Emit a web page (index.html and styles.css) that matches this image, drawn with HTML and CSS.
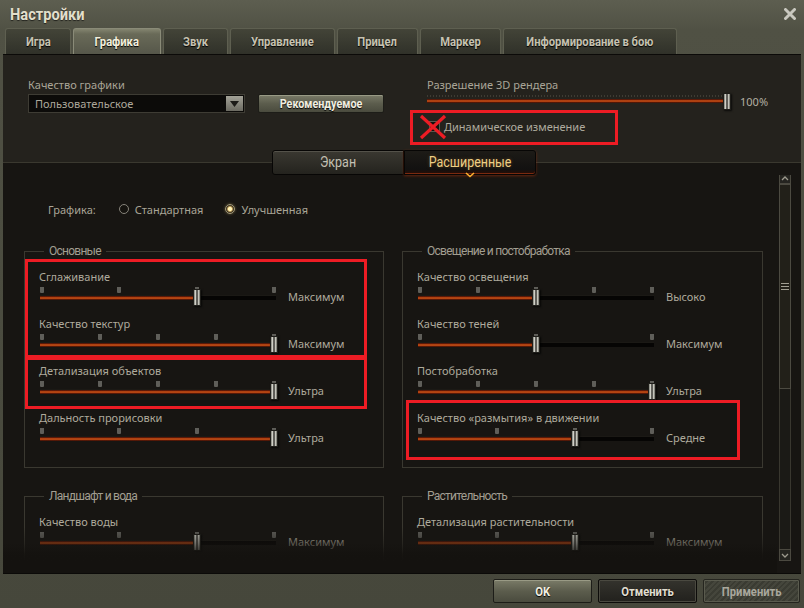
FILE: index.html
```html
<!DOCTYPE html>
<html lang="ru">
<head>
<meta charset="utf-8">
<title>Настройки</title>
<link rel="stylesheet" href="styles.css">
</head>
<body>
<div class="win">
  <header class="titlebar">
    <span class="title"><span class="nar">Настройки</span></span>
    <svg class="close" width="12" height="12" viewBox="0 0 12 12"><path d="M1.5 1.5 L10.5 10.5 M10.5 1.5 L1.5 10.5" stroke="#c9c8bf" stroke-width="3" stroke-linecap="round"/></svg>
  </header>
  <nav class="tabs">
    <div class="tab t1"><span class="nar">Игра</span></div>
    <div class="tab t2 active"><span class="nar">Графика</span></div>
    <div class="tab t3"><span class="nar">Звук</span></div>
    <div class="tab t4"><span class="nar">Управление</span></div>
    <div class="tab t5"><span class="nar">Прицел</span></div>
    <div class="tab t6"><span class="nar">Маркер</span></div>
    <div class="tab t7"><span class="nar">Информирование в бою</span></div>
  </nav>
  <main class="main">
    <section class="top">
      <div class="tcol-left">
        <div class="lbl">Качество графики</div>
        <div class="qrow">
          <div class="select"><span>Пользовательское</span><span class="sel-arrow"><svg width="9" height="6" viewBox="0 0 9 6"><path d="M0 0 H9 L4.5 6 Z" fill="#1c1b18"/></svg></span></div>
          <button class="btn btn-olive btn-rec"><span class="nar">Рекомендуемое</span></button>
        </div>
      </div>
      <div class="tcol-right">
        <div class="lbl">Разрешение 3D рендера</div>
        <div class="rrow">
          <div class="rslider">
            <div class="rdots"></div>
            <div class="rtrack"></div>
            <div class="thumb rthumb"></div>
          </div>
          <span class="rval">100%</span>
        </div>
        <div class="check"><span class="cbox"></span><span>Динамическое изменение</span></div>
      </div>
    </section>
    <div class="subtabs">
      <div class="stab"><span class="nar">Экран</span></div>
      <div class="stab active"><span class="nar">Расширенные</span>
        <svg class="chev" width="10" height="6" viewBox="0 0 10 6"><path d="M1 1 L5 4.5 L9 1" stroke="#ffb030" stroke-width="1.6" fill="none"/></svg>
      </div>
    </div>
    <section class="scrollarea">
      <div class="content">
        <div class="gfxrow">
          <span class="gfxlbl">Графика:</span>
          <span class="radio"></span><span class="rtxt">Стандартная</span>
          <span class="radio on"></span><span class="rtxt">Улучшенная</span>
        </div>
        <div class="groups">
          <fieldset class="grp">
            <legend>Основные</legend>
            <div class="srow">
              <div class="slbl">Сглаживание</div>
              <div class="sline">
                <div class="slider">
                  <div class="track"><div class="fill" style="width:calc(66.667% + 2px)"></div></div>
                  <div class="rail"><i style="left:0%"></i><i style="left:33.333%"></i><i style="left:66.667%"></i><i style="left:100%"></i><b class="thumb" style="left:66.667%"></b></div>
                </div>
                <span class="sval">Максимум</span>
              </div>
            </div>
            <div class="srow">
              <div class="slbl">Качество текстур</div>
              <div class="sline">
                <div class="slider">
                  <div class="track"><div class="fill" style="width:100%"></div></div>
                  <div class="rail"><i style="left:0%"></i><i style="left:25%"></i><i style="left:50%"></i><i style="left:75%"></i><i style="left:100%"></i><b class="thumb" style="left:100%"></b></div>
                </div>
                <span class="sval">Максимум</span>
              </div>
            </div>
            <div class="srow">
              <div class="slbl">Детализация объектов</div>
              <div class="sline">
                <div class="slider">
                  <div class="track"><div class="fill" style="width:100%"></div></div>
                  <div class="rail"><i style="left:0%"></i><i style="left:25%"></i><i style="left:50%"></i><i style="left:75%"></i><i style="left:100%"></i><b class="thumb" style="left:100%"></b></div>
                </div>
                <span class="sval">Ультра</span>
              </div>
            </div>
            <div class="srow">
              <div class="slbl">Дальность прорисовки</div>
              <div class="sline">
                <div class="slider">
                  <div class="track"><div class="fill" style="width:100%"></div></div>
                  <div class="rail"><i style="left:0%"></i><i style="left:33.333%"></i><i style="left:66.667%"></i><i style="left:100%"></i><b class="thumb" style="left:100%"></b></div>
                </div>
                <span class="sval">Ультра</span>
              </div>
            </div>
          </fieldset>
          <fieldset class="grp">
            <legend>Освещение и постобработка</legend>
            <div class="srow">
              <div class="slbl">Качество освещения</div>
              <div class="sline">
                <div class="slider">
                  <div class="track"><div class="fill" style="width:calc(50% + 2px)"></div></div>
                  <div class="rail"><i style="left:0%"></i><i style="left:25%"></i><i style="left:50%"></i><i style="left:75%"></i><i style="left:100%"></i><b class="thumb" style="left:50%"></b></div>
                </div>
                <span class="sval">Высоко</span>
              </div>
            </div>
            <div class="srow">
              <div class="slbl">Качество теней</div>
              <div class="sline">
                <div class="slider">
                  <div class="track"><div class="fill" style="width:calc(50% + 2px)"></div></div>
                  <div class="rail"><i style="left:0%"></i><i style="left:50%"></i><i style="left:100%"></i><b class="thumb" style="left:50%"></b></div>
                </div>
                <span class="sval">Максимум</span>
              </div>
            </div>
            <div class="srow">
              <div class="slbl">Постобработка</div>
              <div class="sline">
                <div class="slider">
                  <div class="track"><div class="fill" style="width:100%"></div></div>
                  <div class="rail"><i style="left:0%"></i><i style="left:25%"></i><i style="left:50%"></i><i style="left:75%"></i><i style="left:100%"></i><b class="thumb" style="left:100%"></b></div>
                </div>
                <span class="sval">Ультра</span>
              </div>
            </div>
            <div class="srow">
              <div class="slbl">Качество «размытия» в движении</div>
              <div class="sline">
                <div class="slider">
                  <div class="track"><div class="fill" style="width:calc(66.667% + 2px)"></div></div>
                  <div class="rail"><i style="left:0%"></i><i style="left:33.333%"></i><i style="left:66.667%"></i><i style="left:100%"></i><b class="thumb" style="left:66.667%"></b></div>
                </div>
                <span class="sval">Средне</span>
              </div>
            </div>
          </fieldset>
          <fieldset class="grp grp-low">
            <legend>Ландшафт и вода</legend>
            <div class="srow">
              <div class="slbl">Качество воды</div>
              <div class="sline">
                <div class="slider">
                  <div class="track"><div class="fill" style="width:calc(66.667% + 2px)"></div></div>
                  <div class="rail"><i style="left:0%"></i><i style="left:33.333%"></i><i style="left:66.667%"></i><i style="left:100%"></i><b class="thumb" style="left:66.667%"></b></div>
                </div>
                <span class="sval">Максимум</span>
              </div>
            </div>
          </fieldset>
          <fieldset class="grp grp-low">
            <legend>Растительность</legend>
            <div class="srow">
              <div class="slbl">Детализация растительности</div>
              <div class="sline">
                <div class="slider">
                  <div class="track"><div class="fill" style="width:calc(66.667% + 2px)"></div></div>
                  <div class="rail"><i style="left:0%"></i><i style="left:33.333%"></i><i style="left:66.667%"></i><i style="left:100%"></i><b class="thumb" style="left:66.667%"></b></div>
                </div>
                <span class="sval">Максимум</span>
              </div>
            </div>
          </fieldset>
        </div>
      </div>
      <div class="scrollbar">
        <div class="sb-btn"><svg width="8" height="5" viewBox="0 0 8 5"><path d="M1 4 L4 1 L7 4" stroke="#9d9a8e" stroke-width="1.3" fill="none"/></svg></div>
        <div class="sb-track">
          <div class="sb-thumb"><svg width="8" height="7" viewBox="0 0 8 7"><path d="M0 0.5 H8 M0 3.5 H8 M0 6.5 H8" stroke="#a19e92" stroke-width="1"/></svg></div>
        </div>
        <div class="sb-btn"><svg width="8" height="5" viewBox="0 0 8 5"><path d="M1 1 L4 4 L7 1" stroke="#9d9a8e" stroke-width="1.3" fill="none"/></svg></div>
      </div>
      <div class="fade"></div>
    </section>
  </main>
  <footer class="bottombar">
    <button class="btn btn-olive bb"><span class="nar">OK</span></button>
    <button class="btn btn-dark bb"><span class="nar">Отменить</span></button>
    <button class="btn btn-off bb"><span class="nar">Применить</span></button>
  </footer>

  <div class="mark m1"></div>
  <div class="mark m2"></div>
  <div class="mark m3"></div>
  <div class="mark m4"></div>
  <svg class="redx" width="30" height="28" viewBox="0 0 30 28"><path d="M3 3 L27 25 M27 3 L3 25" stroke="#ed1c24" stroke-width="3.2"/></svg>
</div>
</body>
</html>
```

FILE: styles.css
```css
* { box-sizing: border-box; margin: 0; padding: 0; }

body {
  width: 804px;
  height: 608px;
  overflow: hidden;
  background: #47483c;
  font-family: "Noto Sans", "DejaVu Sans", sans-serif;
  font-size: 11px;
  color: #aaa699;
}

.win {
  position: relative;
  width: 804px;
  height: 608px;
  display: flex;
  flex-direction: column;
  background: linear-gradient(180deg, #5d5e50 0px, #505144 30px, #46473b 100%);
}

/* condensed look for the game's narrow UI font */
.nar {
  display: inline-block;
  transform: scaleX(.86);
  white-space: nowrap;
}

.titlebar {
  height: 28px;
  display: flex;
  align-items: center;
  justify-content: space-between;
  padding: 0 8px 0 10px;
}

.title {
  font-family: Roboto, "DejaVu Sans", sans-serif;
  font-weight: bold;
  font-size: 17px;
  color: #e2dfcc;
  text-shadow: 0 1px 1px rgba(0,0,0,.6);
}
.title .nar { transform-origin: left center; }

.tabs {
  height: 26px;
  display: flex;
  gap: 2px;
  padding-left: 5px;
}

.tab {
  height: 26px;
  border: 1px solid #5e5f50;
  border-bottom: none;
  border-radius: 3px 3px 0 0;
  background: linear-gradient(180deg, #434438, #303129);
  display: flex;
  align-items: center;
  justify-content: center;
  font-family: Roboto, "DejaVu Sans", sans-serif;
  font-weight: bold;
  font-size: 13px;
  color: #c6c2b1;
  text-shadow: 0 1px 1px #000;
}
.tab.active {
  background: linear-gradient(180deg, #83846f, #696a58 20%, #56574a);
  border-color: #8a8b78;
  color: #f3efdc;
}
.t1 { width: 66px; }
.t2 { width: 88px; }
.t3 { width: 65px; }
.t4 { width: 105px; }
.t5 { width: 81px; }
.t6 { width: 81px; }
.t7 { width: 174px; }

.main {
  flex: 1;
  margin: 0 3px;
  display: flex;
  flex-direction: column;
  background: #171512;
  border-top: 1px solid #0b0a08;
  border-bottom: 1px solid #0b0a08;
  min-height: 0;
}

.top {
  height: 95px;
  background: #24221d;
  display: flex;
  padding: 22px 0 0 25px;
}

.lbl {
  height: 15px;
  line-height: 15px;
  color: #a9a597;
}

.tcol-left { width: 399px; }
.tcol-right { flex: 1; }

.qrow {
  display: flex;
  align-items: center;
  margin-top: 2px;
  gap: 13px;
}

.select {
  width: 217px;
  height: 19px;
  background: #0c0b09;
  border: 1px solid #3e3c34;
  display: flex;
  align-items: center;
  justify-content: space-between;
  padding: 0 1px 0 6px;
  color: #aca89b;
}
.sel-arrow {
  width: 17px;
  height: 15px;
  background: linear-gradient(180deg, #a3a297, #6c6b62);
  display: flex;
  align-items: center;
  justify-content: center;
}

.btn {
  font-family: Roboto, "DejaVu Sans", sans-serif;
  font-weight: bold;
  font-size: 13px;
  border-radius: 2px;
  display: flex;
  align-items: center;
  justify-content: center;
}
.btn-olive {
  background: linear-gradient(180deg, #7a7b68, #5c5d4d 50%, #4a4b3e);
  border: 1px solid #1d1d18;
  box-shadow: inset 0 1px 0 #999a85;
  color: #f1eee0;
  text-shadow: 0 1px 1px #000;
}
.btn-rec {
  width: 126px;
  height: 19px;
  font-size: 12.5px;
}
.btn-dark {
  background: linear-gradient(180deg, #34332d, #22211d);
  border: 1px solid #0d0c0a;
  box-shadow: inset 0 0 0 1px #4a4940;
  color: #e0ddd0;
  text-shadow: 0 1px 1px #000;
}
.btn-off {
  background: repeating-linear-gradient(135deg, #45463c 0 2px, #3a3b32 2px 4px);
  border: 1px solid #25251f;
  box-shadow: inset 0 0 0 1px #5a5b4e;
  color: #a9a89d;
}

.rrow {
  display: flex;
  align-items: center;
  height: 16px;
  margin-top: 1px;
}
.rslider {
  position: relative;
  width: 304px;
  height: 16px;
}
.rdots {
  position: absolute;
  left: 0; top: 2px;
  width: 297px;
  height: 2px;
  background: repeating-linear-gradient(90deg, #3e3b33 0 1px, transparent 1px 3px);
}
.rtrack {
  position: absolute;
  left: 0; top: 6px;
  width: 300px;
  height: 4px;
  background: linear-gradient(180deg, #3a0d05, #8a2a0c 30%, #e8661a 50%, #8a2a0c 70%, #240802);
}
.rthumb {
  position: absolute;
  left: 296px;
  top: 0;
}
.rval {
  margin-left: 9px;
  color: #b3afa2;
}

.check {
  display: flex;
  align-items: center;
  gap: 4px;
  margin-top: 10px;
  margin-left: 2px;
  color: #aeaa9d;
}
.cbox {
  width: 11px;
  height: 11px;
  border: 1px solid #5a584e;
  background: #12110e;
}

.subtabs {
  height: 25px;
  display: flex;
  padding-left: 269px;
  background: linear-gradient(180deg, #24221d 0 12px, #3a382f 12px 13px, #171512 13px);
}
.stab {
  position: relative;
  width: 132px;
  height: 25px;
  display: flex;
  align-items: center;
  justify-content: center;
  font-family: Roboto, "DejaVu Sans", sans-serif;
  font-size: 14.5px;
  color: #c4c0b3;
  background: linear-gradient(180deg, #3a3831, #24231e);
  border: 1px solid #070605;
  border-radius: 3px 0 0 3px;
  box-shadow: inset 0 1px 0 #54524a;
}
.stab.active {
  background: linear-gradient(180deg, #1d1b17, #121110 80%, #2a0d05);
  color: #edcf85;
  border-radius: 0 3px 3px 0;
  box-shadow: inset 0 -1px 0 #7a2a10, 0 1px 3px rgba(200,60,10,.45);
  text-shadow: 0 0 4px rgba(230,160,60,.35);
}
.chev {
  position: absolute;
  left: 60px;
  bottom: -4px;
}

.scrollarea {
  flex: 1;
  min-height: 0;
  display: flex;
  position: relative;
  overflow: hidden;
}

.content {
  flex: 1;
  padding: 26px 0 0 21px;
}

.gfxrow {
  display: flex;
  align-items: center;
  height: 16px;
  margin-left: 24px;
  color: #a9a597;
}
.gfxlbl { margin-right: 23px; }
.rtxt { margin-left: 6px; margin-right: 22px; }
.radio {
  width: 10px;
  height: 10px;
  border-radius: 50%;
  border: 1px solid #86837a;
  background: #15130f;
}
.radio.on {
  border-color: #a49b7a;
  background: radial-gradient(circle, #fff2b8 0 1.6px, #c9a860 2.4px, #3c3322 3.4px);
  box-shadow: 0 0 3px rgba(230,200,120,.4);
}

.groups {
  display: grid;
  grid-template-columns: 360px 361px;
  column-gap: 18px;
  row-gap: 21px;
  margin-top: 27px;
}

.grp {
  border: 1px solid #3a3830;
  padding: 11px 0 18px 14px;
  min-width: 0;
}
.grp-low { padding-bottom: 60px; }
.grp legend {
  margin-left: 5px;
  padding: 0 5px;
  height: 15px;
  line-height: 15px;
  font-family: Roboto, "DejaVu Sans", sans-serif;
  font-size: 12px;
  letter-spacing: -0.75px;
  color: #a29e91;
}

.srow { margin-bottom: 9px; }
.srow:last-child { margin-bottom: 0; }
.slbl {
  height: 14px;
  line-height: 14px;
  color: #aeaa9c;
  white-space: nowrap;
}
.sline {
  display: flex;
  align-items: flex-start;
  height: 24px;
}
.slider {
  position: relative;
  width: 236px;
  height: 24px;
  margin-left: 1px;
}
.track {
  position: absolute;
  left: 0; top: 11px;
  width: 236px;
  height: 5px;
  background: #060504;
  border-top: 1px solid #1b1915;
}
.fill {
  height: 4px;
  background: linear-gradient(180deg, #3a0c04, #8a2a0c 30%, #ea681a 50%, #8a2a0c 72%, #2a0a04);
}
.rail {
  position: absolute;
  left: 0; top: 0;
  width: 232px;
  height: 24px;
}
.rail i {
  position: absolute;
  top: 3px;
  width: 4px;
  height: 6px;
  background: #5f5e59;
  border-radius: 0 0 1px 1px;
}
.thumb {
  display: block;
  width: 8px;
  height: 17px;
  border: 1px solid #1e1d19;
  background: linear-gradient(90deg, #7a7a72 0, #cfcfc6 25%, #4a4944 45%, #4a4944 55%, #c4c4bb 75%, #6e6e66 100%);
  box-shadow: 1px 1px 2px rgba(0,0,0,.7);
}
.rail .thumb {
  position: absolute;
  top: 5px;
  margin-left: -2px;
}
.sval {
  margin-left: 12px;
  padding-top: 6px;
  line-height: 14px;
  color: #aeaa9c;
  white-space: nowrap;
}

.scrollbar {
  width: 12px;
  margin: -3px 10px 12px 0;
  display: flex;
  flex-direction: column;
}
.sb-btn {
  width: 12px;
  height: 12px;
  border: 1px solid #4b4940;
  background: #252420;
  display: flex;
  align-items: center;
  justify-content: center;
}
.sb-track {
  flex: 1;
  border-left: 1px solid #39372f;
  border-right: 1px solid #39372f;
  background: #1b1a16;
}
.sb-thumb {
  height: 205px;
  margin: 0 -1px;
  border: 1px solid #4c4a41;
  background: #222019;
  display: flex;
  align-items: center;
  justify-content: center;
}

.fade {
  position: absolute;
  left: 0; right: 24px; bottom: 0;
  height: 46px;
  background: linear-gradient(180deg, rgba(23,21,18,0), rgba(23,21,18,.5) 35%, rgba(20,18,15,.92) 60%, #14120f 75%);
  pointer-events: none;
}

.bottombar {
  height: 34px;
  display: flex;
  justify-content: flex-end;
  align-items: flex-start;
  gap: 6px;
  padding: 5px 4px 0 0;
}
.bb {
  width: 99px;
  height: 24px;
}
.bb.btn-off { width: 97px; }

.mark {
  position: absolute;
  border: 3px solid #ed1c24;
}
.m1 { left: 410px; top: 110px; width: 208px; height: 35px; }
.m2 { left: 25px; top: 259px; width: 342px; height: 99px; }
.m3 { left: 25px; top: 357px; width: 342px; height: 52px; }
.m4 { left: 406px; top: 400px; width: 334px; height: 60px; }
.redx {
  position: absolute;
  left: 418px;
  top: 113px;
}
```
